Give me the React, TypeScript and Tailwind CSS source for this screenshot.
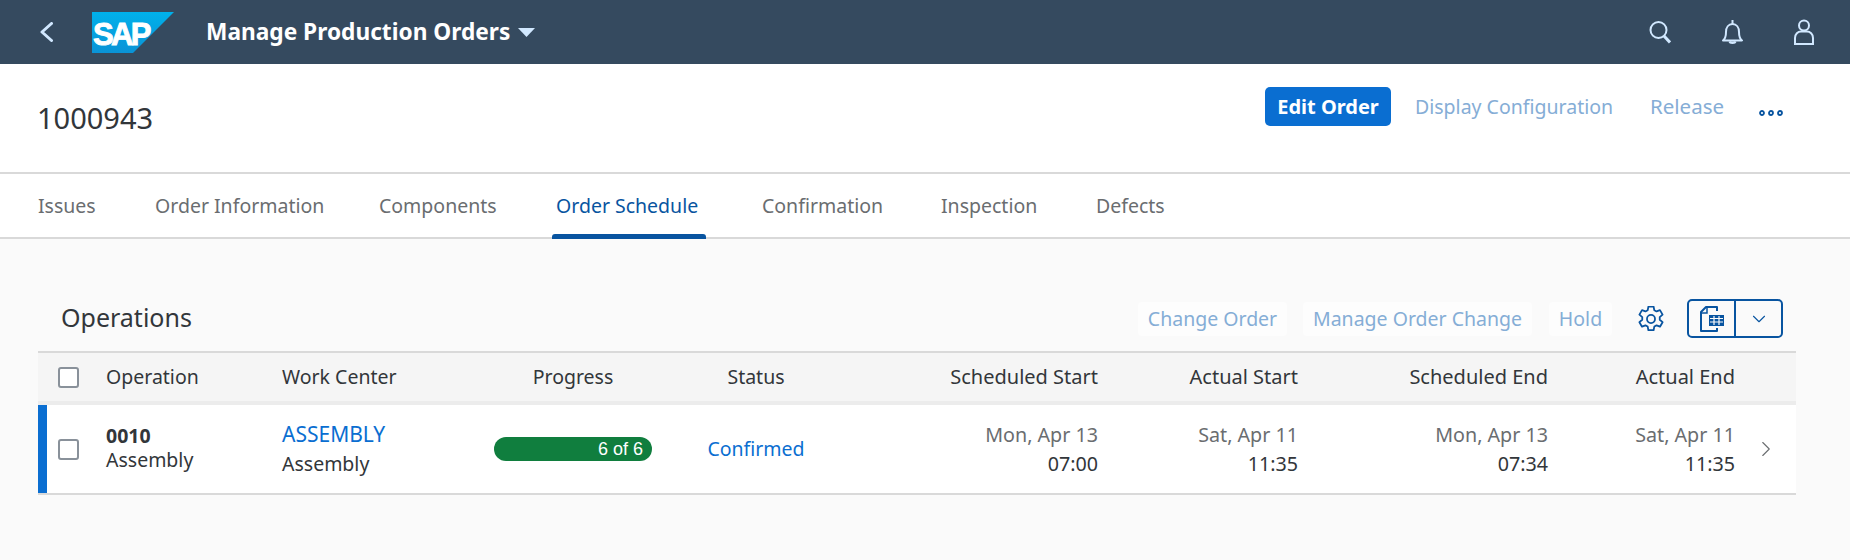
import { ChevronRight, ChevronDown } from "lucide-react";

const tabs = ["Issues", "Order Information", "Components", "Order Schedule", "Confirmation", "Inspection", "Defects"];

const gridCols = "grid grid-cols-[68px_176px_200px_182px_184px_250px_200px_250px_187px_61px]";

function Checkbox() {
  return <div className="w-[21px] h-[21px] rounded-[3px] border-2 border-[#89919a] bg-white" />;
}

function ToolbarButton({ label, width }: { label: string; width: string }) {
  return (
    <button className={`h-[34px] ${width} rounded-[4px] bg-[#fdfdfd] text-[19.5px] text-[#85add6] flex items-center justify-center`}>
      {label}
    </button>
  );
}

function DateCell({ date, time }: { date: string; time: string }) {
  return (
    <div className="flex flex-col items-end justify-center gap-[5px] leading-[24px] text-[19.7px]">
      <span className="text-[#6a6d70]">{date}</span>
      <span className="text-[#32363a]">{time}</span>
    </div>
  );
}

export default function App() {
  return (
    <div className="w-[1850px] h-[560px] overflow-hidden bg-[#fafafa] font-['Noto_Sans',sans-serif] text-[#32363a]">
      {/* Shell bar */}
      <header className="h-16 bg-[#354a5f] flex items-center">
        <svg className="ml-[39px]" width="14" height="20" viewBox="0 0 14 20" fill="none">
          <path d="M12.5 1.5 3 10l9.5 8.5" stroke="#d1e8ff" strokeWidth="3" strokeLinecap="round" strokeLinejoin="round" />
        </svg>
        <svg className="ml-[39px] mb-[-1px]" width="82" height="41" viewBox="0 0 82 41">
          <defs>
            <linearGradient id="sapBlue" x1="0" y1="0" x2="0" y2="1">
              <stop offset="0" stopColor="#00b1eb" />
              <stop offset="1" stopColor="#0a93d6" />
            </linearGradient>
          </defs>
          <polygon points="0,0 82,0 41,41 0,41" fill="url(#sapBlue)" />
          <text x="1" y="33" fill="#fff" stroke="#fff" strokeWidth="0.9" fontFamily="Liberation Sans" fontWeight="700" fontSize="31" letterSpacing="-2.6">
            SAP
          </text>
        </svg>
        <span className="ml-[32px] text-[22.7px] font-bold text-white">Manage Production Orders</span>
        <svg className="ml-[8px]" width="17" height="9" viewBox="0 0 17 9">
          <polygon points="0,0 17,0 8.5,9" fill="#d1e8ff" />
        </svg>
        <div className="ml-auto mr-[36px] flex items-center gap-[51px]">
          <svg width="22" height="24" viewBox="0 0 22 24" fill="none" stroke="#d1e8ff">
            <circle cx="9.5" cy="10" r="8" strokeWidth="2" />
            <path d="M15 16l6 6.5" strokeWidth="3" />
          </svg>
          <svg width="21" height="26" viewBox="0 0 21 26" fill="none" stroke="#d1e8ff" strokeWidth="2">
            <path d="M1 21.5c2.5-2 3-4 3-8.500 0-4.500 2.500-8 6.500-8s6.500 3.500 6.500 8c0 4.500.5 6.500 3 8.500z" strokeLinejoin="round" />
            <path d="M10.500 5V1" />
            <path d="M7.500 22.500c.5 2 5.500 2 6 0" fill="#d1e8ff" />
          </svg>
          <svg width="20" height="26" viewBox="0 0 20 26" fill="none" stroke="#d1e8ff" strokeWidth="2">
            <circle cx="10" cy="6.500" r="5" />
            <path d="M1 25v-6c0-4 3-6.500 6-6.500h6c3 0 6 2.500 6 6.500v6z" />
          </svg>
        </div>
      </header>

      {/* Object header */}
      <section className="h-[110px] bg-white border-b-2 border-[#d9d9d9] flex">
        <h1 className="ml-[37px] mt-[34px] text-[29px] leading-[40px] text-[#32363a]">1000943</h1>
        <div className="ml-auto mr-[67px] mt-[23px] flex items-start">
          <button className="h-[39px] w-[126px] rounded-[5px] bg-[#0a6ed1] text-white text-[20px] font-bold">Edit Order</button>
          <span className="ml-[24px] w-[197px] whitespace-nowrap leading-[39px] text-[19.5px] text-[#85add6]">Display Configuration</span>
          <span className="ml-[38px] w-[73px] whitespace-nowrap leading-[39px] text-[20.5px] text-[#85add6]">Release</span>
          <svg className="ml-[36px] mt-[23px]" width="24" height="6" viewBox="0 0 24 6" fill="none" stroke="#0854a0" strokeWidth="1.800">
            <circle cx="3" cy="3" r="2" />
            <circle cx="12" cy="3" r="2" />
            <circle cx="21" cy="3" r="2" />
          </svg>
        </div>
      </section>

      {/* Tabs */}
      <nav className="h-[65px] bg-white border-b-2 border-[#d9d9d9] pl-[38px] grid grid-cols-[117px_224px_177px_206px_179px_155px_69px] items-center text-[19.5px]">
        {tabs.map((tab) => (
          <div key={tab} className={`relative h-full flex items-center whitespace-nowrap ${tab === "Order Schedule" ? "text-[#0854a0]" : "text-[#6a6d70]"}`}>
            {tab}
            {tab === "Order Schedule" && (
              <span className="absolute -left-[4px] w-[154px] -bottom-[2px] h-[5px] rounded-t-[3px] bg-[#0854a0]" />
            )}
          </div>
        ))}
      </nav>

      {/* Operations table */}
      <section className="mt-[60px] ml-[38px] w-[1758px]">
        <div className="h-[39px] mb-[13px] flex items-center pr-[13px]">
          <h2 className="ml-[23px] mb-[2px] text-[25px] text-[#32363a]">Operations</h2>
          <div className="ml-auto flex items-center">
            <ToolbarButton label="Change Order" width="w-[149px]" />
            <div className="w-[16px]" />
            <ToolbarButton label="Manage Order Change" width="w-[229px]" />
            <div className="w-[17px]" />
            <ToolbarButton label="Hold" width="w-[63px]" />
            <svg className="ml-[26px]" width="26" height="26" viewBox="1 1 22 22" fill="none" stroke="#0854a0" strokeWidth="1.500" strokeLinejoin="round">
              <path d="M9.800 1.500h4.400l.6 3.100 1.900 1 2.900-1.100 2.200 3.800-2.400 2.100v2.200l2.400 2.100-2.200 3.800-2.900-1.100-1.900 1-.6 3.100H9.800l-.6-3.100-1.900-1-2.900 1.100-2.200-3.800 2.400-2.100v-2.200L2.200 8.300l2.200-3.800 2.900 1.100 1.900-1z" />
              <circle cx="12" cy="12" r="3.400" />
            </svg>
            <div className="ml-[23px] h-[39px] w-[96px] rounded-[5px] border-2 border-[#0854a0] flex items-center">
              <div className="w-[47px] h-full border-r-2 border-[#0854a0] flex items-center justify-center">
                <svg width="24" height="26" viewBox="0 0 24 26" fill="none" stroke="#0854a0" strokeWidth="2">
                  <path d="M17 5V1H6L1 6v19h16v-3" strokeLinejoin="round" />
                  <path d="M1 7h6V1" strokeWidth="1.500" />
                  <rect x="9" y="9" width="15" height="11" fill="#0854a0" stroke="none" />
                  <path d="M10 12.500h13M10 16h13M14 10v9M19 10v9" stroke="#fafafa" strokeWidth="1.200" />
                </svg>
              </div>
              <div className="flex-1 flex items-center justify-center">
                <ChevronDown size={22} strokeWidth={1.200} color="#0854a0" />
              </div>
            </div>
          </div>
        </div>

        <div className={`${gridCols} h-[54px] border-t-2 border-[#d9d9d9] border-b-4 border-b-[#ececec] bg-[#f5f5f5] text-[19.5px] items-center whitespace-nowrap`}>
          <div className="pl-[20px]">
            <Checkbox />
          </div>
          <div>Operation</div>
          <div>Work Center</div>
          <div className="text-center">Progress</div>
          <div className="text-center">Status</div>
          <div className="text-right text-[20px]">Scheduled Start</div>
          <div className="text-right text-[20px]">Actual Start</div>
          <div className="text-right text-[20px]">Scheduled End</div>
          <div className="text-right text-[20px]">Actual End</div>
          <div />
        </div>

        <div className={`${gridCols} h-[90px] bg-white border-b-2 border-[#d9d9d9] text-[19.5px]`}>
          <div className="border-l-[9px] border-[#0a6ed1] pl-[11px] flex items-center">
            <Checkbox />
          </div>
          <div className="flex flex-col justify-center leading-[24px] pb-[2px]">
            <span className="font-bold">0010</span>
            <span>Assembly</span>
          </div>
          <div className="flex flex-col justify-center leading-[30px]">
            <span className="text-[#0a6ed1] text-[21px]">ASSEMBLY</span>
            <span>Assembly</span>
          </div>
          <div className="flex items-center justify-center">
            <div className="w-[158px] h-[24px] rounded-full bg-[#107e3e] flex items-center justify-end pr-[9px] font-['Liberation_Sans',sans-serif] text-[18px] text-white">
              6 of 6
            </div>
          </div>
          <div className="flex items-center justify-center text-[#0a6ed1]">Confirmed</div>
          <DateCell date="Mon, Apr 13" time="07:00" />
          <DateCell date="Sat, Apr 11" time="11:35" />
          <DateCell date="Mon, Apr 13" time="07:34" />
          <DateCell date="Sat, Apr 11" time="11:35" />
          <div className="flex items-center pl-[18px]">
            <ChevronRight size={26} strokeWidth={1} color="#6a6d70" />
          </div>
        </div>
      </section>
    </div>
  );
}
